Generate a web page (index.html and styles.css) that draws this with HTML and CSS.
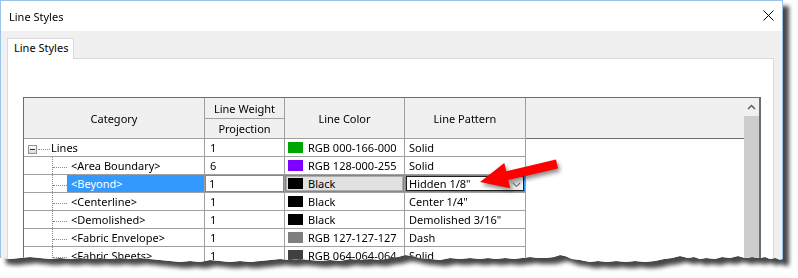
FILE: index.html
```html
<!DOCTYPE html>
<html>
<head>
<meta charset="utf-8">
<link rel="stylesheet" href="styles.css">
</head>
<body>
<div class="frame">
  <div class="window">
    <div class="titlebar">
      <span class="title">Line Styles</span>
      <svg class="close" width="11" height="11" viewBox="0 0 11 11"><path d="M0.5 0.5 L10.5 10.5 M10.5 0.5 L0.5 10.5" stroke="#000" stroke-width="1" fill="none"/></svg>
    </div>
    <div class="client">
      <div class="tab">Line Styles</div>
      <div class="panel">
        <div class="grid">
          <div class="table">
            <div class="hc h-cat">Category</div>
            <div class="hc h-w1">Line Weight</div>
            <div class="hc h-col">Line Color</div>
            <div class="hc h-pat">Line Pattern</div>
            <div class="hc h-fill"></div>
            <div class="hc h-w2">Projection</div>

            <div class="c cat"><span class="toggle"><span class="minus"></span></span><span class="hl short"></span><span class="lbl root">Lines</span></div>
            <div class="c w">1</div>
            <div class="c col"><span class="sw sw-green"></span>RGB 000-166-000</div>
            <div class="c pat">Solid</div>
            <div class="c empty"></div>

            <div class="c cat"><span class="vl"></span><span class="hl"></span><span class="lbl">&lt;Area Boundary&gt;</span></div>
            <div class="c w">6</div>
            <div class="c col"><span class="sw sw-purple"></span>RGB 128-000-255</div>
            <div class="c pat">Solid</div>
            <div class="c empty"></div>

            <div class="c cat"><span class="vl"></span><span class="hl"></span><span class="lbl sel">&lt;Beyond&gt;</span></div>
            <div class="c w edit"><div class="box">1</div></div>
            <div class="c col edit"><div class="box"><div class="btn"><span class="sw sw-black"></span>Black</div></div></div>
            <div class="c pat edit"><div class="box"><div class="combo"><span class="combo-text">Hidden 1/8"</span><span class="dd"><svg width="9" height="6" viewBox="0 0 9 6"><path d="M1 1 L4.5 4.5 L8 1" stroke="#7a7a7a" stroke-width="1.2" fill="none"/></svg></span></div></div></div>
            <div class="c empty"></div>

            <div class="c cat"><span class="vl"></span><span class="hl"></span><span class="lbl">&lt;Centerline&gt;</span></div>
            <div class="c w">1</div>
            <div class="c col"><span class="sw sw-black"></span>Black</div>
            <div class="c pat">Center 1/4"</div>
            <div class="c empty"></div>

            <div class="c cat"><span class="vl"></span><span class="hl"></span><span class="lbl">&lt;Demolished&gt;</span></div>
            <div class="c w">1</div>
            <div class="c col"><span class="sw sw-black"></span>Black</div>
            <div class="c pat">Demolished 3/16"</div>
            <div class="c empty"></div>

            <div class="c cat"><span class="vl"></span><span class="hl"></span><span class="lbl">&lt;Fabric Envelope&gt;</span></div>
            <div class="c w">1</div>
            <div class="c col"><span class="sw sw-gray"></span>RGB 127-127-127</div>
            <div class="c pat">Dash</div>
            <div class="c empty"></div>

            <div class="c cat"><span class="vl"></span><span class="hl"></span><span class="lbl">&lt;Fabric Sheets&gt;</span></div>
            <div class="c w">1</div>
            <div class="c col"><span class="sw sw-dark"></span>RGB 064-064-064</div>
            <div class="c pat">Solid</div>
            <div class="c empty"></div>
          </div>
          <div class="scrollbar">
            <div class="sb-up"><svg width="9" height="6" viewBox="0 0 9 6"><path d="M1 5 L4.5 1.5 L8 5" stroke="#606060" stroke-width="1.5" fill="none"/></svg></div>
            <div class="sb-thumb"></div>
          </div>
        </div>
      </div>
    </div>
    <svg class="arrow" width="100" height="50" viewBox="0 0 100 50">
      <polygon points="10,32 34.3,12.9 36.3,21.2 86,9.6 88,18.4 38.3,30 40.3,38.3" fill="#ff0000"/>
    </svg>
  </div>
</div>
</body>
</html>
```

FILE: styles.css
```css
html, body {
  margin: 0;
  padding: 0;
  background: #ffffff;
}
body {
  width: 798px;
  height: 278px;
  overflow: hidden;
  font-family: "Noto Sans", "Open Sans", sans-serif;
  font-size: 11px;
  color: #000;
}
.frame {
  width: 783px;
  filter: drop-shadow(6px 6px 2px rgba(0, 0, 0, 0.72));
}
.window {
  position: relative;
  width: 783px;
  height: 268px;
  box-sizing: border-box;
  border: 1px solid #9cc3e8;
  border-bottom: none;
  background: #f0f0f0;
  overflow: hidden;
  clip-path: polygon(0 0, 783px 0, 783px 259px, 780px 260px, 775px 258px, 770px 259px, 765px 257px, 760px 258px, 752px 257px, 745px 258px, 738px 256px, 730px 258px, 722px 257px, 715px 259px, 706px 258px, 700px 259px, 694px 257px, 688px 258px, 680px 256px, 672px 258px, 664px 259px, 655px 261px, 645px 262px, 635px 261px, 626px 262px, 616px 261px, 607px 262px, 598px 261px, 590px 262px, 580px 260px, 572px 259px, 565px 256px, 560px 255px, 554px 257px, 546px 258px, 538px 258px, 530px 257px, 522px 258px, 514px 259px, 505px 258px, 496px 259px, 488px 258px, 480px 259px, 470px 258px, 460px 259px, 450px 258px, 440px 260px, 430px 259px, 420px 258px, 412px 256px, 405px 255px, 398px 257px, 390px 258px, 380px 260px, 370px 259px, 360px 260px, 350px 259px, 340px 261px, 330px 260px, 320px 261px, 310px 260px, 300px 259px, 290px 260px, 280px 259px, 270px 260px, 260px 261px, 250px 262px, 240px 261px, 230px 262px, 220px 261px, 210px 260px, 200px 262px, 190px 261px, 180px 262px, 170px 261px, 160px 260px, 150px 259px, 140px 258px, 130px 259px, 120px 258px, 110px 259px, 100px 258px, 90px 259px, 80px 258px, 70px 259px, 60px 258px, 50px 259px, 40px 258px, 30px 257px, 20px 258px, 10px 259px, 0 258px);
}
.titlebar {
  height: 30px;
  background: #ffffff;
  display: flex;
  justify-content: space-between;
  align-items: center;
  padding: 0 8px 0 8px;
}
.title {
  line-height: 15px;
}
.close {
  display: block;
  align-self: flex-start;
  margin-top: 9px;
}
.client {
  padding: 7px 8px 0 6px;
}
.tab {
  position: relative;
  z-index: 1;
  width: 67px;
  height: 21px;
  box-sizing: border-box;
  border: 1px solid #d9d9d9;
  border-bottom: none;
  background: #ffffff;
  margin-bottom: -1px;
  padding: 1px 0 0 6px;
  line-height: 15px;
}
.panel {
  border: 1px solid #d9d9d9;
  background: #ffffff;
  padding: 38px 12px 0 15px;
  height: 260px;
}
.grid {
  display: flex;
  border: 1px solid #6d6d6d;
  border-bottom: none;
  height: 240px;
}
.table {
  flex: 1;
  display: grid;
  grid-template-columns: 181px 80px 120px 121px 1fr;
  grid-template-rows: 21px 20px repeat(7, 18px);
  align-content: start;
}
.hc {
  background: #f0f0f0;
  border-right: 1px solid #a0a0a0;
  border-bottom: 1px solid #a0a0a0;
  display: flex;
  align-items: center;
  justify-content: center;
  line-height: 15px;
}
.h-cat { grid-row: 1 / 3; grid-column: 1; }
.h-w1 { grid-row: 1; grid-column: 2; padding-top: 1px; }
.h-w2 { grid-row: 2; grid-column: 2; }
.h-col { grid-row: 1 / 3; grid-column: 3; }
.h-pat { grid-row: 1 / 3; grid-column: 4; }
.h-fill {
  grid-row: 1 / 3;
  grid-column: 5;
  border-right: none;
  border-bottom: 1px solid #6d6d6d;
}
.c {
  border-right: 1px solid #a0a0a0;
  border-bottom: 1px solid #a0a0a0;
  display: flex;
  align-items: center;
  line-height: 17px;
  white-space: nowrap;
  overflow: hidden;
}
.c.empty {
  border: none;
}
.c.w { padding-left: 5px; }
.c.col { padding-left: 3px; }
.c.pat { padding-left: 4px; }
.sw {
  display: inline-block;
  width: 15px;
  height: 11px;
  margin-right: 5px;
  flex: none;
}
.sw-green { background: rgb(0, 166, 0); }
.sw-purple { background: rgb(128, 0, 255); }
.sw-black { background: #000000; }
.sw-gray { background: rgb(127, 127, 127); }
.sw-dark { background: rgb(64, 64, 64); }

.c.cat {
  align-items: flex-start;
}
.toggle {
  flex: none;
  width: 9px;
  height: 9px;
  box-sizing: border-box;
  margin: 6px 0 0 4px;
  border: 1px solid #919191;
  background: linear-gradient(#fbfbfb, #dcdcdc);
  display: flex;
  align-items: center;
  justify-content: center;
}
.minus {
  width: 5px;
  height: 1px;
  background: #2b2b2b;
}
.vl {
  flex: none;
  align-self: stretch;
  margin-left: 28px;
  border-left: 1px dotted #8c8c8c;
}
.hl {
  flex: none;
  width: 14px;
  margin-top: 10px;
  border-top: 1px dotted #8c8c8c;
}
.hl.short {
  width: 12px;
  margin-left: 1px;
}
.lbl {
  padding-left: 4px;
  padding-right: 4px;
  line-height: 17px;
}
.lbl.root {
  padding-left: 1px;
}
.lbl.sel {
  flex: 1;
  background: #3399ff;
  color: #ffffff;
}
.c.edit {
  padding-left: 0;
  align-items: stretch;
}
.box {
  flex: 1;
  border: 1px solid #3399ff;
  display: flex;
  align-items: center;
  line-height: 15px;
  padding-left: 3px;
}
.c.col.edit .box,
.c.pat.edit .box {
  padding-left: 0;
}
.btn {
  flex: 1;
  align-self: stretch;
  background: #e1e1e1;
  border: 1px solid #adadad;
  display: flex;
  align-items: center;
  padding-left: 1px;
}
.combo {
  flex: 1;
  align-self: stretch;
  border: 1px solid #1e1e1e;
  display: flex;
  align-items: center;
  padding-left: 2px;
}
.combo-text {
  flex: 1;
}
.dd {
  width: 11px;
  height: 9px;
  margin-right: 1px;
  margin-top: 3px;
  background: #ececec;
  display: flex;
  align-items: center;
  justify-content: center;
}
.dd svg { display: block; }
.scrollbar {
  width: 15px;
  background: #f0f0f0;
  border-right: 1px solid #6d6d6d;
  display: flex;
  flex-direction: column;
}
.sb-up {
  height: 18px;
  display: flex;
  align-items: center;
  justify-content: center;
}
.sb-up svg { display: block; }
.sb-thumb {
  flex: 1;
  background: #cdcdcd;
}
.arrow {
  position: absolute;
  left: 469px;
  top: 149px;
  filter: drop-shadow(2px 3px 2px rgba(0, 0, 0, 0.45));
}
```
